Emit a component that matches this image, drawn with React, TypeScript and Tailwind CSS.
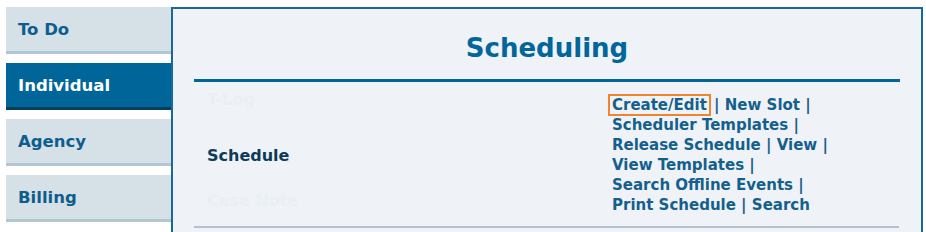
import React from "react";

const tabs = [
    { label: "To Do", active: false },
    { label: "Individual", active: true },
    { label: "Agency", active: false },
    { label: "Billing", active: false },
];

const linkLines: string[][] = [
    ["Create/Edit", "New Slot", ""],
    ["Scheduler Templates", ""],
    ["Release Schedule", "View", ""],
    ["View Templates", ""],
    ["Search Offline Events", ""],
    ["Print Schedule", "Search"],
];

function LinkLine({ items, first }: { items: string[]; first: boolean }) {
    return (
        <div className="whitespace-nowrap">
            {items.map((item, i) => (
                <React.Fragment key={i}>
                    {i > 0 && <span> | </span>}
                    {item && (
                        <a
                            href="#"
                            className={
                                first && i === 0
                                    ? "outline-2 outline-[#f0852d] px-[2px] -ml-[2px]"
                                    : ""
                            }
                        >
                            {item}
                        </a>
                    )}
                </React.Fragment>
            ))}
        </div>
    );
}

export default function App() {
    return (
        <main
            className="flex h-[232px] w-[926px] overflow-hidden bg-white pl-[6px] pt-[7px]"
            style={{ fontFamily: '"DejaVu Sans", Verdana, sans-serif' }}
        >
            <nav className="flex w-[165px] shrink-0 flex-col gap-[9px]">
                {tabs.map((tab) => (
                    <div
                        key={tab.label}
                        className={
                            tab.active
                                ? "flex h-[47px] items-center border-b-[3px] border-[#00405e] bg-[#006699] pl-[12px] pt-[3px] text-[16.5px] font-bold text-white"
                                : "flex h-[47px] items-center border-b-[3px] border-[#b2c6d3] bg-[#d6e0e7] pl-[12px] pt-[3px] text-[16.5px] font-bold text-[#0d5e8e]"
                        }
                    >
                        {tab.label}
                    </div>
                ))}
            </nav>

            <section className="h-[240px] w-[752px] shrink-0 border-2 border-[#19689a] bg-[#eff3f7] px-[21px]">
                <h1 className="flex h-[73px] items-center justify-center border-b-[3px] border-[#006699] pt-[8px] text-[26px] font-bold text-[#00669b]">
                    Scheduling
                </h1>
                <div className="flex w-[705px] border-b-2 border-[#aec4d2]">
                    <div className="flex w-[418px] flex-col pl-[13px] pt-[8px] text-[16px] font-bold leading-[19px]">
                        <span className="text-[#eaeff3]">T-Log</span>
                        <span className="mt-[37px] text-[#0d3b59]">Schedule</span>
                        <span className="mt-[26px] text-[#eaeff3]">Case Note</span>
                    </div>
                    <div className="pb-[11px] pt-[13px] text-[15px] font-bold leading-[20px] text-[#155f8d]">
                        {linkLines.map((line, i) => (
                            <LinkLine key={i} items={line} first={i === 0} />
                        ))}
                    </div>
                </div>
            </section>
        </main>
    );
}
